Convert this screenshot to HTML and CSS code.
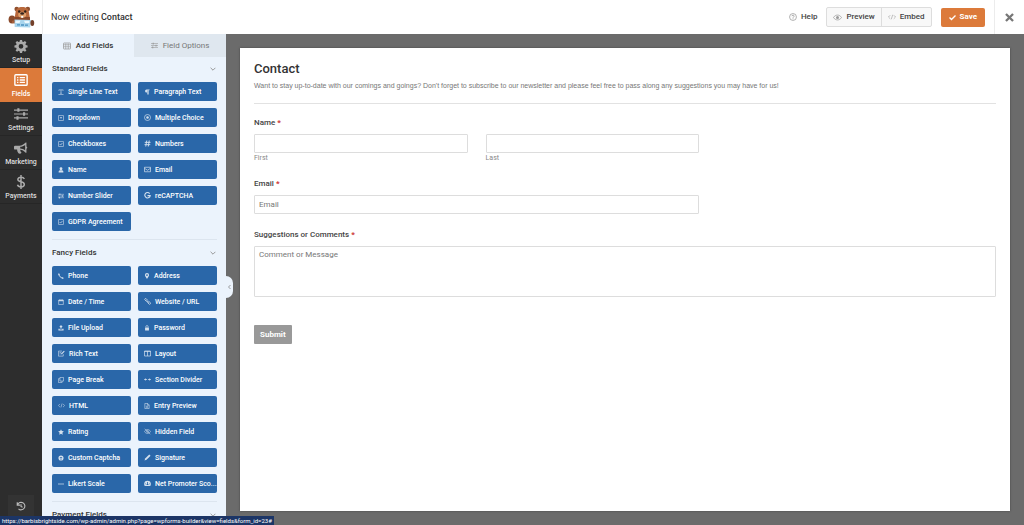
FILE: index.html
```html
<!DOCTYPE html>
<html lang="en">
<head>
<meta charset="utf-8">
<title>Form Builder - Contact</title>
<link rel="stylesheet" href="styles.css">
</head>
<body>
<svg class="sprite" aria-hidden="true">
  <symbol id="gear" viewBox="0 0 16 16"><path fill="currentColor" fill-rule="evenodd" d="M6.8 1h2.4l.4 2 1.2.5L12.500 2.300l1.700 1.700-1.200 1.700.5 1.200 2 .4v2.400l-2 .4-.5 1.200 1.200 1.700-1.700 1.700-1.700-1.200-1.200.5-.4 2H6.800l-.4-2-1.200-.5-1.700 1.200L1.800 13l1.200-1.700-.5-1.200-2-.4V7.300l2-.4L3 5.700 1.800 4l1.700-1.700 1.700 1.200L6.400 3zM8 5.700a2.700 2.700 0 1 0 0 5.400 2.700 2.700 0 0 0 0-5.400z"/></symbol>
  <symbol id="list" viewBox="0 0 16 14"><rect x="1" y="1" width="14" height="12" rx="1" fill="none" stroke="currentColor" stroke-width="1.600"/><path stroke="currentColor" stroke-width="1.500" d="M3.500 4.300H5M6.500 4.300h6M3.500 7H5M6.500 7h6M3.500 9.700H5M6.500 9.700h6"/></symbol>
  <symbol id="table" viewBox="0 0 16 14"><rect x="1" y="1" width="14" height="12" rx="1" fill="none" stroke="currentColor" stroke-width="1.500"/><path stroke="currentColor" stroke-width="1.300" d="M1 4.500h14M1 8.500h14M5.500 2v11M10.500 2v11"/></symbol>
  <symbol id="sliders" viewBox="0 0 16 14"><path stroke="currentColor" stroke-width="1.400" d="M0 2.500h16M0 7h16M0 11.500h16"/><path stroke="currentColor" stroke-width="2.400" d="M5 .5v4M11.500 5v4M4 9.500v4"/></symbol>
  <symbol id="horn" viewBox="0 0 18 16"><path fill="currentColor" fill-rule="evenodd" d="M1.500 5H7c3 0 5.500-1.500 8-4h1v5a1.600 1.600 0 0 1 0 3v5h-1c-2.500-2.500-4.500-3.500-7-3.800.2 1.800.6 2.800 1.700 3.800-.9 1.500-3 1.500-4 .7C4.600 13.300 4 12 4 10H1.500A1.500 1.500 0 0 1 0 8.500v-2A1.500 1.500 0 0 1 1.500 5zM8 6.500v2c2.500.2 4.500 1 6.300 2.300V4C12.300 5.500 10.500 6.300 8 6.500z"/></symbol>
  <symbol id="dollar" viewBox="0 0 10 16"><path fill="none" stroke="currentColor" stroke-width="1.700" d="M8.800 4.500C8.300 3.200 6.900 2.600 5 2.600 2.800 2.600 1.400 3.600 1.400 5.200 1.400 8.700 8.800 6.900 8.800 10.800c0 1.600-1.500 2.700-3.800 2.700-2.200 0-3.500-.9-4-2.400M5 0v16"/></symbol>
  <symbol id="history" viewBox="0 0 16 16"><path fill="none" stroke="currentColor" stroke-width="1.800" d="M2 2v4.500h4.500M2.500 6A6 6 0 1 1 4 12.500M8 5v3.600l2.500 1.500"/></symbol>
  <symbol id="help" viewBox="0 0 16 16"><circle cx="8" cy="8" r="6.900" fill="none" stroke="currentColor" stroke-width="1.500"/><path fill="none" stroke="currentColor" stroke-width="1.700" d="M5.700 6.300C5.800 3.700 10.500 3.900 10.300 6.500 10.200 7.900 8 7.700 8 9.500M8 10.700v1.700"/></symbol>
  <symbol id="eye" viewBox="0 0 18 12"><path fill="none" stroke="currentColor" stroke-width="1.500" d="M1 6c4-6.500 12-6.500 16 0-4 6.500-12 6.500-16 0z"/><circle cx="9" cy="6" r="3" fill="currentColor"/></symbol>
  <symbol id="code" viewBox="0 0 18 12"><path fill="none" stroke="currentColor" stroke-width="1.400" d="M5 2 1 6l4 4M13 2l4 4-4 4M10.500 1l-3 10"/></symbol>
  <symbol id="tick" viewBox="0 0 14 12"><path fill="none" stroke="currentColor" stroke-width="2.800" d="m1 6 4 4 8-8"/></symbol>
  <symbol id="close" viewBox="0 0 14 14"><path stroke="currentColor" stroke-width="3.600" d="m1.500 1.500 11 11M12.500 1.500l-11 11"/></symbol>
  <symbol id="chev" viewBox="0 0 10 6"><path fill="none" stroke="currentColor" stroke-width="1.400" d="m1 1 4 4 4-4"/></symbol>
  <symbol id="chevleft" viewBox="0 0 6 10"><path fill="none" stroke="currentColor" stroke-width="1.400" d="M5 1 1 5l4 4"/></symbol>
  <symbol id="text" viewBox="0 0 14 14"><path fill="none" stroke="currentColor" stroke-width="1.400" d="M2 4V2h10v2M7 2v8M5 10h4M1 13h12"/></symbol>
  <symbol id="para" viewBox="0 0 14 14"><path fill="currentColor" d="M6 1h7v1.800h-1.400V13h-1.500V2.800H8.700V13H7.200V8.200H6A3.600 3.600 0 0 1 6 1z"/></symbol>
  <symbol id="drop" viewBox="0 0 14 14"><rect x="1" y="1" width="12" height="12" rx="1" fill="none" stroke="currentColor" stroke-width="1.400"/><path fill="currentColor" d="M4 5.500h6L7 9z"/></symbol>
  <symbol id="radio" viewBox="0 0 14 14"><circle cx="7" cy="7" r="6" fill="none" stroke="currentColor" stroke-width="1.400"/><circle cx="7" cy="7" r="2.500" fill="currentColor"/></symbol>
  <symbol id="check" viewBox="0 0 14 14"><rect x="1" y="1" width="12" height="12" rx="1" fill="none" stroke="currentColor" stroke-width="1.400"/><path fill="none" stroke="currentColor" stroke-width="1.600" d="m3.800 7 2.300 2.500 4.300-5"/></symbol>
  <symbol id="hash" viewBox="0 0 14 14"><path stroke="currentColor" stroke-width="1.900" d="M5.500 1 3.500 13M10.500 1l-2 12M1.500 4.700h11.500M1 9.300h11.500"/></symbol>
  <symbol id="user" viewBox="0 0 14 14"><circle cx="7" cy="4" r="3.300" fill="currentColor"/><path fill="currentColor" d="M1.500 13v-2C1.500 8.500 4 7.500 7 7.500s5.500 1 5.500 3.500v2z"/></symbol>
  <symbol id="mail" viewBox="0 0 14 14"><path fill="none" stroke="currentColor" stroke-width="1.400" d="M1 2.500h12v9H1zM1 4.500l6 4 6-4"/></symbol>
  <symbol id="google" viewBox="0 0 14 14"><path fill="none" stroke="currentColor" stroke-width="2.200" d="M11.300 3.200A5.400 5.400 0 1 0 12.400 7.200H7"/></symbol>
  <symbol id="phone" viewBox="0 0 14 14"><path fill="none" stroke="currentColor" stroke-width="2.200" d="M2 1.500C2 7.500 6.500 12 12.500 12M2 1.500v3l2 .5M12.500 12h-3L9 10"/></symbol>
  <symbol id="pin" viewBox="0 0 14 14"><path fill="currentColor" fill-rule="evenodd" d="M7 0a4.800 4.800 0 0 1 4.800 4.800C11.800 8 8.500 10.500 7 14 5.500 10.500 2.200 8 2.200 4.800A4.800 4.800 0 0 1 7 0zm0 2.800a2 2 0 1 0 0 4 2 2 0 0 0 0-4z"/></symbol>
  <symbol id="cal" viewBox="0 0 14 14"><path fill="none" stroke="currentColor" stroke-width="1.400" d="M1.500 2.500h11v10.500h-11zM4.500 0v2.500M9.500 0v2.500"/><path fill="currentColor" d="M1.500 2.500h11v2.700h-11z"/></symbol>
  <symbol id="link" viewBox="0 0 14 14"><path fill="none" stroke="currentColor" stroke-width="1.600" d="M5.500 7.500 2 4a1.700 1.700 0 0 1 2.500-2.500L7.800 5M6.500 8.500 10 12a1.700 1.700 0 0 0 2.500-2.500L9 6M5 4.500l4.500 5"/></symbol>
  <symbol id="upload" viewBox="0 0 14 14"><path fill="currentColor" d="M7 0l4 4.500H8.500V8h-3V4.500H3zM1 9h3v1.500h6V9h3v4H1z"/></symbol>
  <symbol id="lock" viewBox="0 0 14 14"><path fill="none" stroke="currentColor" stroke-width="1.600" d="M4.300 6V4a2.700 2.700 0 0 1 5.400 0v2"/><rect x="2.500" y="6" width="9" height="7" rx="1" fill="currentColor"/></symbol>
  <symbol id="edit" viewBox="0 0 16 14"><path fill="none" stroke="currentColor" stroke-width="1.400" d="M9 1.500H1V13h11V8.500M3.500 5h4M3.500 8H6"/><path stroke="currentColor" stroke-width="2.400" d="m7.500 8.500 7-7"/></symbol>
  <symbol id="columns" viewBox="0 0 14 14"><path fill="none" stroke="currentColor" stroke-width="1.400" d="M1 2h12v10H1zM7 2v10M1 3h12"/></symbol>
  <symbol id="copy" viewBox="0 0 14 14"><path fill="none" stroke="currentColor" stroke-width="1.400" d="M4.500 1H13v8.500H4.500zM4.500 4H1v9h8.500V9.500"/></symbol>
  <symbol id="arrows" viewBox="0 0 16 14"><path stroke="currentColor" stroke-width="1.700" d="M2 7h5M9 7h5"/><path fill="currentColor" d="M4 4v6L0 7zM12 4v6l4-3z"/></symbol>
  <symbol id="doc" viewBox="0 0 14 14"><path fill="none" stroke="currentColor" stroke-width="1.400" d="M2 1h6.500L12 4.500V13H2zM8 1v4h4M4.500 7.500h5M4.500 10h5"/></symbol>
  <symbol id="star" viewBox="0 0 14 14"><path fill="currentColor" d="m7 .5 2 4.300 4.600.5-3.400 3.200.9 4.700L7 10.900l-4.100 2.300.9-4.700L.4 5.300 5 4.800z"/></symbol>
  <symbol id="hidden" viewBox="0 0 16 14"><path fill="none" stroke="currentColor" stroke-width="1.300" d="M1 7c3.500-6 10.500-6 14 0-3.500 6-10.500 6-14 0zM1.500 1l13 12"/><circle cx="8" cy="7" r="2.200" fill="none" stroke="currentColor" stroke-width="1.200"/></symbol>
  <symbol id="captcha" viewBox="0 0 14 14"><path fill="currentColor" fill-rule="evenodd" d="M7 1a6 6 0 1 0 0 12A6 6 0 0 0 7 1zM4.300 5.200h5.400v1.500L7.800 8H6.200L4.300 6.700zM6 9.500h2V11H6z"/></symbol>
  <symbol id="pencil" viewBox="0 0 14 14"><path fill="currentColor" d="M10.500.8 13.200 3.500 5 11.700 1 13l1.300-4z"/></symbol>
  <symbol id="minus" viewBox="0 0 14 14"><path stroke="currentColor" stroke-width="1.700" d="M0 7h14"/></symbol>
  <symbol id="gauge" viewBox="0 0 14 14"><path fill="currentColor" fill-rule="evenodd" d="M7 1.500A6.700 6.700 0 0 0 .3 8.200c0 1.500.4 2.700 1.100 3.800h11.200c.7-1.100 1.100-2.300 1.100-3.800A6.700 6.700 0 0 0 7 1.500zM6.200 4h1.600v4.200h1V10H5.200V8.200h1zM2.500 7H4v1.600H2.500zM10 7h1.500v1.600H10z"/></symbol>
</svg>

<header class="topbar">
  <a class="brand" href="#" aria-label="Home">
    <svg class="logo" viewBox="0 0 27 24" aria-hidden="true">
      <ellipse cx="4" cy="14.500" rx="3.400" ry="4" fill="#8a4a2b"/><path fill="#a55f3a" d="M4 16l5-2v5l-5-1z"/>
      <circle cx="8.700" cy="4" r="2.300" fill="#8f4f2d"/><circle cx="19.800" cy="4" r="2.300" fill="#8f4f2d"/>
      <path fill="#b8683b" d="M7.500 7.500C8 3.500 10.500 2 14.200 2s6.300 1.500 6.800 5.500l1 6.500H6.500z"/>
      <path fill="#87482b" d="M6.800 12h15l.4 5H6z"/>
      <ellipse cx="14.200" cy="9.800" rx="4" ry="3" fill="#dda06c"/>
      <circle cx="11.200" cy="6.500" r="1.200" fill="#2d2018"/><circle cx="17.200" cy="6.500" r="1.200" fill="#2d2018"/>
      <ellipse cx="14.200" cy="8.500" rx="1.900" ry="1.300" fill="#35221b"/><path fill="#fff" d="M13.200 11h2v1.800h-2z"/>
      <path fill="#a9d5ed" d="M6.500 14.500 23 15l-.8 7.500-15.500-.5z"/><path fill="#eef8fc" d="M7.500 15.500h5l-1 2.500H7.300zM16 15.700h5.500l-.2 2.300H17z"/>
      <path stroke="#4a91c1" stroke-width="1.300" d="M9 19.800h3M13 20h3M17 20.200h3"/>
      <ellipse cx="24.300" cy="18" rx="1.900" ry="2.900" fill="#734029"/>
    </svg>
  </a>
  <div class="editing">Now editing <strong>Contact</strong></div>
  <div class="actions">
    <button class="help"><svg class="ic8"><use href="#help"/></svg>Help</button>
    <div class="pair">
      <button><svg class="ic9"><use href="#eye"/></svg>Preview</button>
      <button><svg class="ic8"><use href="#code"/></svg>Embed</button>
    </div>
    <button class="save"><svg class="ic7"><use href="#tick"/></svg>Save</button>
  </div>
  <button class="exit" aria-label="Close"><svg class="ic9"><use href="#close"/></svg></button>
</header>

<div class="workspace">
  <nav class="rail">
    <a href="#"><svg><use href="#gear"/></svg>Setup</a>
    <a href="#" class="active"><svg><use href="#list"/></svg>Fields</a>
    <a href="#"><svg><use href="#sliders"/></svg>Settings</a>
    <a href="#"><svg><use href="#horn"/></svg>Marketing</a>
    <a href="#"><svg><use href="#dollar"/></svg>Payments</a>
    <button class="revisions" aria-label="Revisions"><svg><use href="#history"/></svg></button>
  </nav>

  <aside class="panel">
    <div class="tabs">
      <button class="current"><svg class="ic8"><use href="#table"/></svg>Add Fields</button>
      <button><svg class="ic7"><use href="#sliders"/></svg>Field Options</button>
    </div>
    <div class="groups">
      <section>
        <h2>Standard Fields<svg><use href="#chev"/></svg></h2>
        <div class="fields">
          <button><svg><use href="#text"/></svg><span>Single Line Text</span></button>
          <button><svg><use href="#para"/></svg><span>Paragraph Text</span></button>
          <button><svg><use href="#drop"/></svg><span>Dropdown</span></button>
          <button><svg class="wide"><use href="#radio"/></svg><span>Multiple Choice</span></button>
          <button><svg><use href="#check"/></svg><span>Checkboxes</span></button>
          <button><svg class="wide"><use href="#hash"/></svg><span>Numbers</span></button>
          <button><svg><use href="#user"/></svg><span>Name</span></button>
          <button><svg class="wide"><use href="#mail"/></svg><span>Email</span></button>
          <button><svg><use href="#sliders"/></svg><span>Number Slider</span></button>
          <button><svg class="wide"><use href="#google"/></svg><span>reCAPTCHA</span></button>
          <button><svg><use href="#check"/></svg><span>GDPR Agreement</span></button>
        </div>
      </section>
      <section>
        <h2>Fancy Fields<svg><use href="#chev"/></svg></h2>
        <div class="fields">
          <button><svg><use href="#phone"/></svg><span>Phone</span></button>
          <button><svg><use href="#pin"/></svg><span>Address</span></button>
          <button><svg><use href="#cal"/></svg><span>Date / Time</span></button>
          <button><svg class="wide"><use href="#link"/></svg><span>Website / URL</span></button>
          <button><svg><use href="#upload"/></svg><span>File Upload</span></button>
          <button><svg><use href="#lock"/></svg><span>Password</span></button>
          <button><svg class="wide"><use href="#edit"/></svg><span>Rich Text</span></button>
          <button><svg class="wide"><use href="#columns"/></svg><span>Layout</span></button>
          <button><svg><use href="#copy"/></svg><span>Page Break</span></button>
          <button><svg class="wide"><use href="#arrows"/></svg><span>Section Divider</span></button>
          <button><svg class="wide"><use href="#code"/></svg><span>HTML</span></button>
          <button><svg><use href="#doc"/></svg><span>Entry Preview</span></button>
          <button><svg><use href="#star"/></svg><span>Rating</span></button>
          <button><svg class="wide"><use href="#hidden"/></svg><span>Hidden Field</span></button>
          <button><svg><use href="#captcha"/></svg><span>Custom Captcha</span></button>
          <button><svg class="wide"><use href="#pencil"/></svg><span>Signature</span></button>
          <button><svg><use href="#minus"/></svg><span>Likert Scale</span></button>
          <button><svg class="wide"><use href="#gauge"/></svg><span>Net Promoter Sco...</span></button>
        </div>
      </section>
      <section>
        <h2>Payment Fields<svg><use href="#chev"/></svg></h2>
      </section>
    </div>
    <button class="collapse" aria-label="Collapse panel"><svg><use href="#chevleft"/></svg></button>
  </aside>

  <main class="canvas">
    <form class="sheet">
      <h1>Contact</h1>
      <p class="desc">Want to stay up-to-date with our comings and goings? Don't forget to subscribe to our newsletter and please feel free to pass along any suggestions you may have for us!</p>
      <fieldset class="row">
        <legend>Name <b>*</b></legend>
        <div class="names">
          <div><input id="first" type="text"><label for="first">First</label></div>
          <div><input id="last" type="text"><label for="last">Last</label></div>
        </div>
      </fieldset>
      <div class="row">
        <label class="title" for="email">Email <b>*</b></label>
        <input class="medium" id="email" type="email" placeholder="Email">
      </div>
      <div class="row">
        <label class="title" for="message">Suggestions or Comments <b>*</b></label>
        <textarea id="message" placeholder="Comment or Message"></textarea>
      </div>
      <button class="submit" type="button">Submit</button>
    </form>
  </main>
</div>
<div class="status">https://barbisbrightside.com/wp-admin/admin.php?page=wpforms-builder&amp;view=fields&amp;form_id=23#</div>
</body>
</html>
```
FILE: styles.css
```css
* { box-sizing: border-box; }
body {
  margin: 0;
  height: 100vh;
  display: flex;
  flex-direction: column;
  overflow: hidden;
  font: 7px/10px Roboto, "Liberation Sans", sans-serif;
  color: #444;
  background: #6b6b6b;
}
button, input, textarea { font: inherit; color: inherit; margin: 0; }
button { border: 0; background: none; padding: 0; display: flex; align-items: center; white-space: nowrap; }
a { color: inherit; text-decoration: none; }
svg { flex: none; }
.sprite { position: absolute; width: 0; height: 0; }
.ic7 { width: 7px; height: 7px; }
.ic8 { width: 8px; height: 8px; }
.ic9 { width: 9px; height: 9px; }

/* Top bar */
.topbar { flex: none; height: 34px; display: flex; align-items: center; background: #fff; }
.brand { width: 43px; height: 34px; display: flex; align-items: center; justify-content: center; border-right: 1px solid #ececec; }
.logo { width: 27px; height: 24px; }
.editing { flex: 1; padding-left: 8px; font-size: 9px; line-height: 12px; color: #333; }
.editing strong { font-weight: 500; }
.actions { display: flex; align-items: center; padding-right: 9px; font-size: 8px; font-weight: 500; }
.actions svg { color: #999; }
.help { gap: 4px; margin-right: 9px; }
.pair { display: flex; margin-right: 9px; border: 1px solid #ddd; border-radius: 2px; background: #f8f8f8; }
.pair button { height: 18px; padding: 0 6px; gap: 4px; }
.pair button + button { border-left: 1px solid #ddd; }
.save { height: 19px; padding: 0 8px; gap: 4px; border-radius: 2px; background: #dc7a3a; color: #fff; font-weight: 700; }
.actions .save svg { color: #fff; }
.exit { width: 30px; height: 34px; justify-content: center; border-left: 1px solid #ececec; color: #777; }

/* Left rail */
.workspace { flex: 1; min-height: 0; display: flex; }
.rail { flex: none; width: 42px; display: flex; flex-direction: column; align-items: stretch; background: #2d2d2d; color: #ddd; }
.rail a { height: 34px; padding-top: 5px; display: flex; flex-direction: column; align-items: center; gap: 2px; font-weight: 500; border-bottom: 1px solid #262626; }
.rail a svg { width: 14px; height: 14px; color: #aaa; }
.rail .active { background: #dc7a3a; color: #fff; border-color: #dc7a3a; }
.rail .active svg { color: #fff; }
.revisions { width: 26px; height: 22px; margin: auto auto 8px; justify-content: center; background: #333; color: #bbb; }
.revisions svg { width: 10px; height: 10px; }

/* Field panel */
.panel { flex: none; width: 184px; position: relative; display: flex; flex-direction: column; background: #ebf3fc; }
.tabs { flex: none; display: flex; height: 23px; }
.tabs button { flex: 1; justify-content: center; gap: 5px; font-size: 8px; color: #777; background: #dfe7ef; }
.tabs .current { font-weight: 500; color: #333; background: #ebf3fc; }
.tabs svg { color: #999; }
.groups { flex: 1; min-height: 0; overflow: hidden; padding: 0 9px 0 10px; }
.groups section { padding: 6px 0 8px; border-bottom: 1px solid #dce5ef; }
.groups section + section { padding-top: 7px; }
.groups h2 { margin: 0 0 7px; display: flex; align-items: center; justify-content: space-between; font-size: 8px; line-height: 12px; font-weight: 500; color: #333; }
.groups h2 svg { width: 6px; height: 4px; margin-right: 1px; color: #888; }
.fields { display: grid; grid-template-columns: 1fr 1fr; gap: 7px; }
.fields button { height: 19px; min-width: 0; padding: 0 2px 0 6px; gap: 4px; border-radius: 2px; background: #2a67a9; color: #fff; font-weight: 500; }
.fields svg { width: 6px; height: 6px; opacity: .8; }
.fields .wide { width: 7px; height: 7px; }
.collapse { position: absolute; left: 100%; top: 242px; width: 7px; height: 22px; justify-content: center; border-radius: 0 7px 7px 0; background: #ebf3fc; color: #777; }
.collapse svg { width: 3px; height: 6px; }

/* Form preview */
.canvas { flex: 1; min-width: 0; display: flex; padding: 14px; }
.sheet { flex: 1; min-width: 0; padding: 12px 14px; background: #fff; box-shadow: 0 0 2px #444; font-size: 8px; }
.sheet h1 { margin: 0; font-size: 13px; line-height: 18px; font-weight: 500; color: #333; }
.desc { margin: 2px 0 14px; padding: 1px 0 12px; border-bottom: 1px solid #e2e2e2; font-family: "Liberation Sans", sans-serif; font-size: 7px; color: #777; }
.row { margin: 0 0 16px; padding: 0; border: 0; min-width: 0; }
.row legend, .title { display: block; padding: 0; margin-bottom: 6px; font-weight: 500; }
.row b { color: #c33; }
.names { display: grid; grid-template-columns: 1fr 1fr; gap: 18px; width: 60%; }
.names label { display: block; margin-top: 1px; font-size: 7px; line-height: 9px; color: #888; }
.sheet input, .sheet textarea { display: block; width: 100%; height: 19px; padding: 0 4px; border: 1px solid #ddd; border-radius: 1px; background: #fff; outline: 0; }
.sheet .medium { width: 60%; }
.sheet textarea { height: 51px; padding: 3px 4px; resize: none; }
.sheet ::placeholder { color: #777; opacity: 1; }
.submit { height: 19px; margin-top: 28px; padding: 0 6px; border-radius: 1px; background: #999; color: #fff; font-weight: 700; }

.status { position: fixed; left: 0; bottom: 0; padding: 0 2px; font-size: 6px; line-height: 9px; background: #1c3566; color: #fff; }
```
